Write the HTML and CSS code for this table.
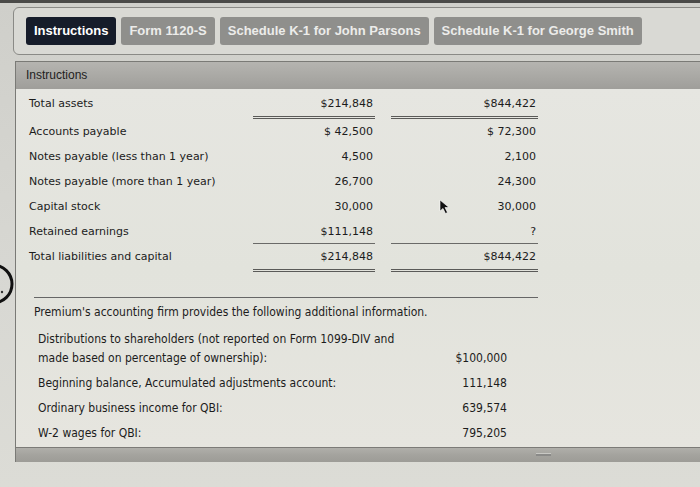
FILE: index.html
```
<!DOCTYPE html>
<html>
<head>
<meta charset="utf-8">
<link rel="stylesheet" href="styles.css">
</head>
<body>
<div class="screen">
  <div class="tabbox">
    <div class="tab active">Instructions</div>
    <div class="tab">Form 1120-S</div>
    <div class="tab wide">Schedule K-1 for John Parsons</div>
    <div class="tab wide">Schedule K-1 for George Smith</div>
  </div>

  <div class="panel">
    <div class="panel-head">Instructions</div>
    <div class="panel-body">
      <div class="sheet">
        <div class="lbl">Total assets</div>
        <div class="num dbl">$214,848</div>
        <div class="num dbl">$844,422</div>

        <div class="lbl">Accounts payable</div>
        <div class="num">$ 42,500</div>
        <div class="num">$ 72,300</div>

        <div class="lbl">Notes payable (less than 1 year)</div>
        <div class="num">4,500</div>
        <div class="num">2,100</div>

        <div class="lbl">Notes payable (more than 1 year)</div>
        <div class="num">26,700</div>
        <div class="num">24,300</div>

        <div class="lbl">Capital stock</div>
        <div class="num">30,000</div>
        <div class="num">30,000</div>

        <div class="lbl">Retained earnings</div>
        <div class="num single">$111,148</div>
        <div class="num single">?</div>

        <div class="lbl">Total liabilities and capital</div>
        <div class="num dbl">$214,848</div>
        <div class="num dbl">$844,422</div>
      </div>

      <div class="info">
        <p class="intro">Premium's accounting firm provides the following additional information.</p>
        <div class="facts">
          <div class="flbl">Distributions to shareholders (not reported on Form 1099-DIV and<br>made based on percentage of ownership):</div>
          <div class="fval">$100,000</div>
          <div class="flbl">Beginning balance, Accumulated adjustments account:</div>
          <div class="fval">111,148</div>
          <div class="flbl">Ordinary business income for QBI:</div>
          <div class="fval">639,574</div>
          <div class="flbl">W-2 wages for QBI:</div>
          <div class="fval">795,205</div>
        </div>
      </div>
    </div>
    <div class="panel-foot"><span class="grip"></span></div>
  </div>

  <svg class="ring" width="50" height="50" viewBox="0 0 50 50">
    <circle cx="17" cy="25" r="19" fill="none" stroke="#111" stroke-width="3"/>
    <circle cx="26" cy="33" r="1.2" fill="#333"/>
  </svg>
  <svg class="cursor" width="12" height="16" viewBox="0 0 12 16">
    <path d="M1 1 L1 12 L4 9.5 L6.5 14.5 L8.5 13.5 L6 8.5 L10 8.5 Z" fill="#111" stroke="#fff" stroke-width="0.6"/>
  </svg>
</div>
</body>
</html>
```

FILE: styles.css
```
* { box-sizing: border-box; }
html, body {
  margin: 0;
  padding: 0;
  width: 700px;
  height: 487px;
  overflow: hidden;
}
body {
  background: #d3d3ce;
  font-family: "DejaVu Sans", Verdana, sans-serif;
  color: #1c1c1c;
}
.screen {
  position: relative;
  width: 700px;
  height: 487px;
  border-top: 3px solid #4a4a48;
  padding-top: 4px;
  background: linear-gradient(180deg, #cfcfca 0%, #d8d8d3 60%, #dcdcd6 100%);
}
.tabbox {
  margin-left: 13px;
  width: 700px;
  height: 48px;
  border: 1px solid #8a8a86;
  border-radius: 6px;
  background: #d9d9d4;
  display: flex;
  align-items: center;
  gap: 5px;
  padding-left: 12px;
  font-family: "Liberation Sans", Arial, sans-serif;
  font-weight: bold;
  font-size: 13px;
}
.tab {
  height: 28px;
  line-height: 28px;
  padding: 0 8px;
  border-radius: 3px;
  background: #8f8f8c;
  color: #ececea;
  white-space: nowrap;
}
.tab.active {
  background: #161c2a;
  color: #ffffff;
}
.panel {
  margin-top: 6px;
  margin-left: 15px;
  width: 690px;
  border-left: 1px solid #7a7a76;
  border-top: 1px solid #7a7a76;
  background: #e3e3dd;
}
.panel-head {
  height: 27px;
  line-height: 27px;
  padding-left: 10px;
  background: linear-gradient(180deg, #b5b4b0 0%, #a8a7a3 60%, #9f9e9a 100%);
  font-family: "Liberation Sans", Arial, sans-serif;
  font-size: 12px;
  color: #1e1e1e;
}
.panel-body {
  padding: 2px 0 4px 13px;
  background: linear-gradient(180deg, #e6e6e1 0%, #e2e3dc 50%, #e6e5df 100%);
}
.sheet {
  display: grid;
  grid-template-columns: 224px 122px 163px;
  font-size: 11px;
}
.sheet .num:nth-child(3n) {
  margin-left: 16px;
  width: 147px;
}
.lbl, .num {
  line-height: 25px;
  height: 25px;
}
.num {
  text-align: right;
  padding-right: 2px;
}
.num.dbl {
  height: 28px;
  border-bottom: 3px double #5a5a58;
}
.num.single {
  height: 25px;
  border-bottom: 1px solid #6a6a68;
}
.info {
  margin-top: 25px;
  margin-left: 5px;
  width: 504px;
  border-top: 1px solid #666;
  font-family: "DejaVu Sans Condensed", "DejaVu Sans", sans-serif;
  font-size: 12px;
}
.intro {
  margin: 0;
  padding-top: 7px;
  line-height: 15px;
}
.facts {
  margin-top: 10px;
  margin-left: 4px;
  width: 469px;
  display: grid;
  grid-template-columns: 1fr auto;
  row-gap: 6px;
  align-items: end;
}
.flbl {
  line-height: 19px;
}
.fval {
  text-align: right;
  line-height: 19px;
}
.panel-foot {
  position: relative;
  height: 15px;
  border-top: 1px solid #7c7b77;
  background: linear-gradient(180deg, #b0afaa 0%, #a4a39e 50%, #9d9c97 100%);
}
.grip {
  position: absolute;
  left: 520px;
  top: 5px;
  width: 15px;
  height: 3px;
  background: #8a8a88;
  border-top: 1px solid #c8c8c4;
}
.ring {
  position: absolute;
  left: -24px;
  top: 256px;
}
.cursor {
  position: absolute;
  left: 439px;
  top: 196px;
}
```
